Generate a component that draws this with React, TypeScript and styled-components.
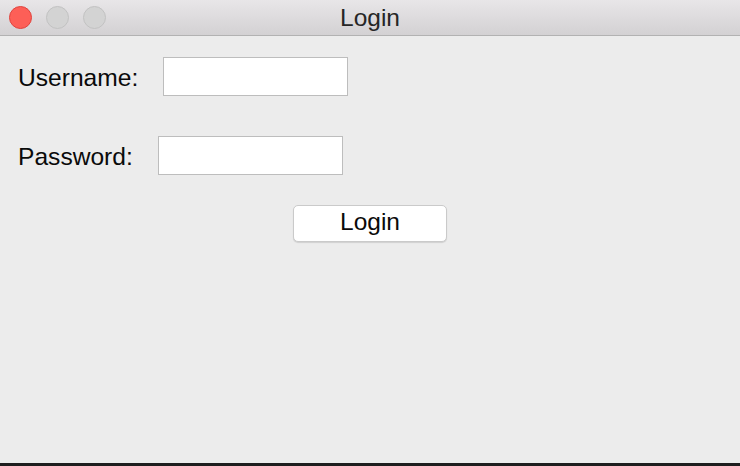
import React from "react";
import styled, { createGlobalStyle } from "styled-components";

const GlobalStyle = createGlobalStyle`
  html, body {
    margin: 0;
    padding: 0;
    background: #ececec;
  }
  body {
    font-family: "Liberation Sans", Arial, Helvetica, sans-serif;
    color: #000;
  }
  * { box-sizing: border-box; }
`;

const Window = styled.div`
  width: 740px;
  height: 466px;
  display: flex;
  flex-direction: column;
  background: #ececec;
  border-bottom: 3px solid #1e1e1e;
`;

const TitleBar = styled.div`
  height: 36px;
  flex: none;
  display: grid;
  grid-template-columns: 1fr auto 1fr;
  align-items: center;
  background: linear-gradient(#e8e6e8, #d3d1d3);
  border-bottom: 1px solid #b2b2b2;
`;

const Lights = styled.div`
  display: flex;
  gap: 14px;
  padding-left: 9px;
  align-items: center;
`;

const Light = styled.span<{ $color: string; $border: string }>`
  width: 23px;
  height: 23px;
  border-radius: 50%;
  background: ${(p) => p.$color};
  border: 1px solid ${(p) => p.$border};
`;

const Title = styled.div`
  font-size: 24.5px;
  line-height: 34px;
  color: #262626;
`;

const Content = styled.div`
  flex: 1;
  display: flex;
  flex-direction: column;
  padding: 21px 0 0 18px;
`;

const Row = styled.div<{ $mb: number }>`
  display: flex;
  align-items: center;
  gap: 25px;
  margin-bottom: ${(p) => p.$mb}px;
`;

const Label = styled.label`
  font-size: 24.6px;
  line-height: 28px;
  padding-top: 2px;
  color: #0a0a0a;
`;

const Input = styled.input`
  width: 185px;
  height: 39px;
  border: 1px solid #bdbdbd;
  background: #fff;
  outline: none;
  padding: 0 4px;
  font-family: inherit;
  font-size: 20px;
`;

const ButtonRow = styled.div`
  display: flex;
  justify-content: center;
  margin-left: -18px;
`;

const Button = styled.button`
  width: 154px;
  height: 37px;
  background: #fff;
  border: 1px solid #cacaca;
  border-radius: 5px;
  box-shadow: 0 1px 1px rgba(0, 0, 0, 0.12);
  font-family: "Liberation Sans", Arial, sans-serif;
  font-size: 24.5px;
  color: #0a0a0a;
  padding: 0 0 3px;
  line-height: 32px;
`;

export default function App() {
  return (
    <>
      <GlobalStyle />
      <Window>
        <TitleBar>
          <Lights>
            <Light $color="#fd5f57" $border="#e0443e" />
            <Light $color="#d3d3d3" $border="#c2c2c2" />
            <Light $color="#d3d3d3" $border="#c2c2c2" />
          </Lights>
          <Title>Login</Title>
          <span />
        </TitleBar>
        <Content>
          <Row $mb={40}>
            <Label>Username:</Label>
            <Input type="text" />
          </Row>
          <Row $mb={30}>
            <Label>Password:</Label>
            <Input type="password" />
          </Row>
          <ButtonRow>
            <Button>Login</Button>
          </ButtonRow>
        </Content>
      </Window>
    </>
  );
}
